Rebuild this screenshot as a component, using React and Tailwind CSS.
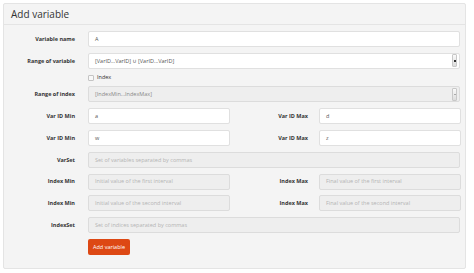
import React from "react";

const font = { fontFamily: '"Open Sans", "DejaVu Sans", sans-serif' };

function Label({ children, className = "" }) {
  return (
    <div className={`w-[72px] shrink-0 text-right pr-[1px] text-[5.5px] font-bold text-[#333] ${className}`}>
      {children}
    </div>
  );
}

function Input({ value, placeholder, disabled, className = "" }) {
  return (
    <div
      className={`h-[16px] flex items-center pl-[6px] text-[5.5px] rounded-[2px] border ${
        disabled ? "bg-[#eeeeee] border-[#dcdcdc]" : "bg-white border-[#e0e0e0]"
      } ${className}`}
    >
      {value ? (
        <span className="text-[#555]">{value}</span>
      ) : (
        <span className="text-[#b4b4b4]">{placeholder}</span>
      )}
    </div>
  );
}

function Select({ value, disabled }) {
  return (
    <div
      className={`h-[16px] w-[372px] flex items-center justify-between pl-[6px] pr-[2px] text-[5.5px] rounded-[2px] border ${
        disabled ? "bg-[#eeeeee] border-[#dcdcdc] text-[#888]" : "bg-white border-[#e0e0e0] text-[#555]"
      }`}
    >
      <span>{value}</span>
      <div className="w-[5px] h-[13px] rounded-[1px] border border-[#c8c8c8] bg-gradient-to-b from-[#fafafa] to-[#dcdcdc] flex items-center justify-center">
        <div className={`w-[2px] h-[1.5px] ${disabled ? "bg-[#aaa]" : "bg-[#333]"}`} />
      </div>
    </div>
  );
}

function FullRow({ label, children }) {
  return (
    <div className="flex items-center gap-[12px]">
      <Label>{label}</Label>
      {children}
    </div>
  );
}

function HalfRow({ l1, v1, p1, l2, v2, p2, disabled }) {
  return (
    <div className="flex items-center">
      <Label>{l1}</Label>
      <div className="w-[12px]" />
      <Input value={v1} placeholder={p1} disabled={disabled} className="w-[142px]" />
      <div className="w-[78px] text-right text-[5.5px] font-bold text-[#333]">{l2}</div>
      <div className="w-[11px]" />
      <Input value={v2} placeholder={p2} disabled={disabled} className="w-[142px]" />
    </div>
  );
}

export default function App() {
  return (
    <div className="w-[474px] h-[273px] bg-white p-[3px] pr-[8px]" style={font}>
      <div className="h-[266px] bg-[#f4f4f4] border border-[#e4e4e4] rounded-[2px]">
        <div className="h-[21px] flex items-center px-[7px] border-b border-[#e4e4e4] text-[10px] text-[#333]">
          Add variable
        </div>
        <div className="pt-[6px] flex flex-col gap-[5.8px]">
          <FullRow label="Variable name">
            <Input value="A" className="w-[372px]" />
          </FullRow>
          <FullRow label="Range of variable">
            <Select value="[VarID...VarID] ∪ [VarID...VarID]" />
          </FullRow>
          <div className="flex items-center h-[6px] pl-[84px] gap-[3px]">
            <div className="w-[6px] h-[6px] border border-[#c4c4c4] bg-[#f8f8f8] rounded-[1px]" />
            <span className="text-[5.5px] text-[#333]">Index</span>
          </div>
          <FullRow label="Range of index">
            <Select value="[IndexMin...IndexMax]" disabled />
          </FullRow>
          <HalfRow l1="Var ID Min" v1="a" l2="Var ID Max" v2="d" />
          <HalfRow l1="Var ID Min" v1="w" l2="Var ID Max" v2="z" />
          <FullRow label="VarSet">
            <Input placeholder="Set of variables separated by commas" disabled className="w-[372px]" />
          </FullRow>
          <HalfRow
            l1="Index Min"
            p1="Initial value of the first interval"
            l2="Index Max"
            p2="Final value of the first interval"
            disabled
          />
          <HalfRow
            l1="Index Min"
            p1="Initial value of the second interval"
            l2="Index Max"
            p2="Final value of the second interval"
            disabled
          />
          <FullRow label="IndexSet">
            <Input placeholder="Set of indices separated by commas" disabled className="w-[372px]" />
          </FullRow>
          <div className="flex pl-[84px]">
            <div className="flex items-center h-[16px] px-[5px] rounded-[2px] bg-[#dd4814] text-white text-[5.5px]">
              Add variable
            </div>
          </div>
        </div>
      </div>
    </div>
  );
}
